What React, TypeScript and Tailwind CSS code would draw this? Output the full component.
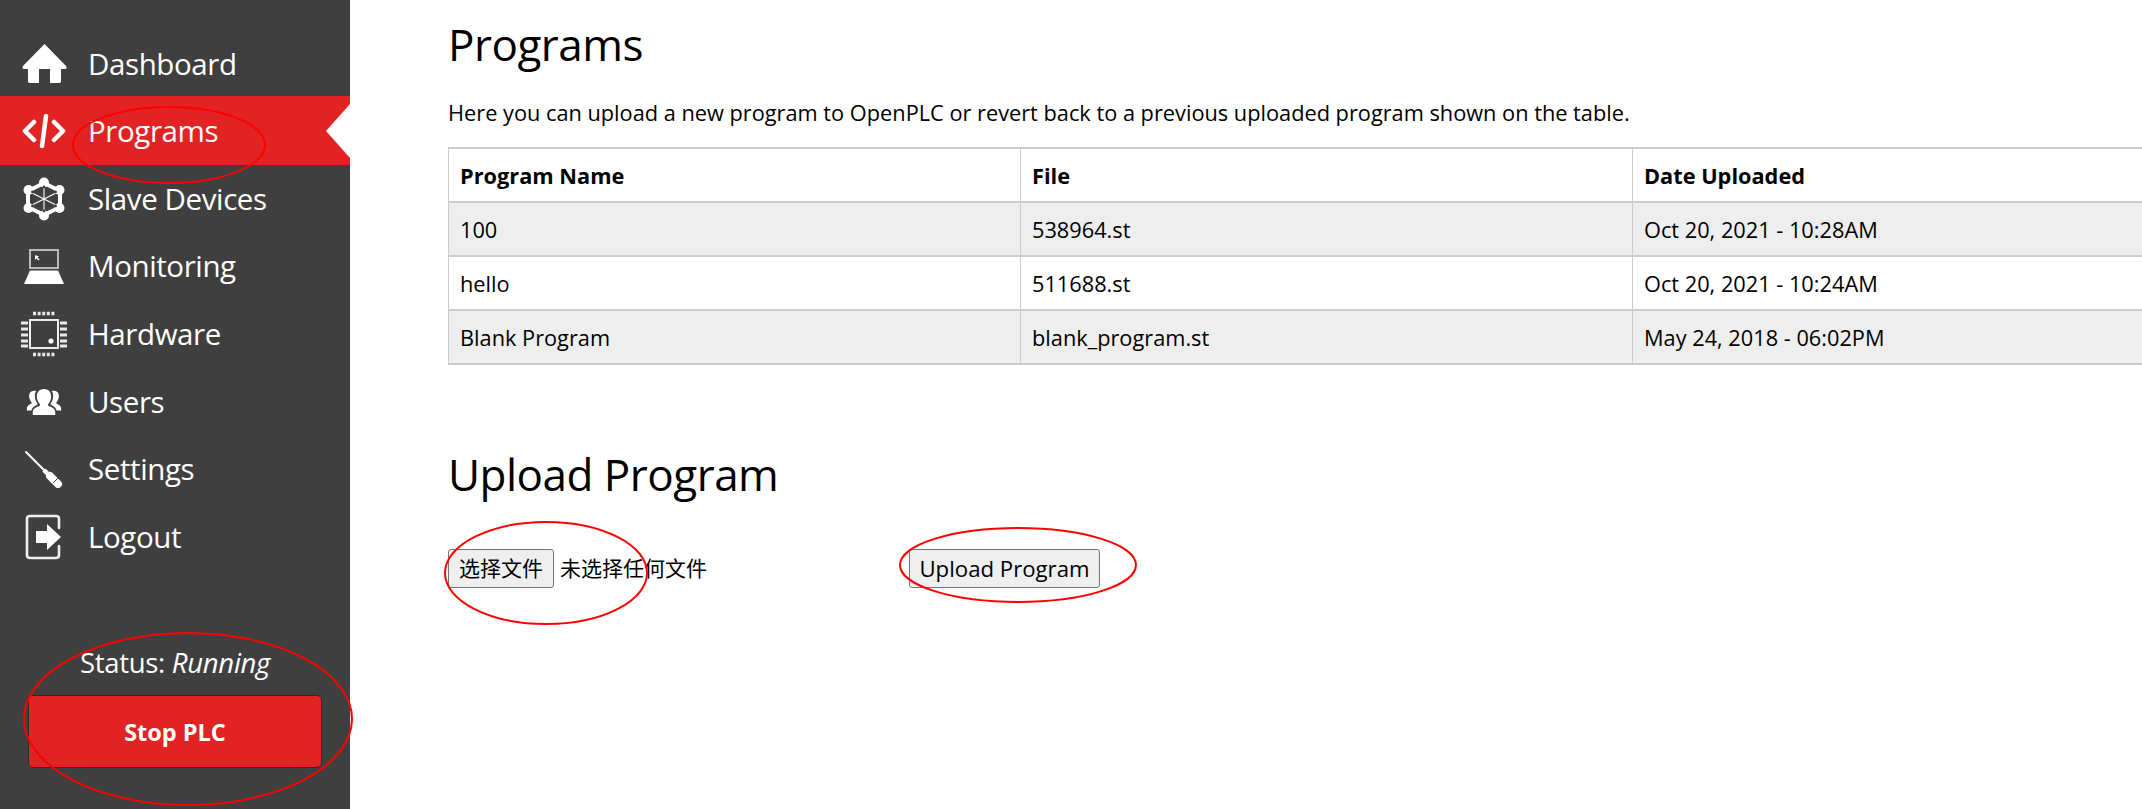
const HomeIcon = () => (
  <svg viewBox="0 0 45 39" className="h-[39px] w-[45px]" fill="white">
    <path d="M22.5 0 L44 22 Q45.5 25 43 25 L39 25 L39 37.5 Q39 39 37 39 L28 39 L28 25 L17 25 L17 39 L8 39 Q6 39 6 37.5 L6 25 L2 25 Q-0.5 25 1 22 Z" />
  </svg>
);

const CodeIcon = () => (
  <svg viewBox="0 0 44 34" className="h-[34px] w-[44px]" fill="none" stroke="white" strokeWidth="4.5" strokeLinecap="round" strokeLinejoin="round">
    <path d="M12 8 L3 17 L12 26" />
    <path d="M32 8 L41 17 L32 26" />
    <path d="M24 2 L20 32" />
  </svg>
);

const NetworkIcon = () => (
  <svg viewBox="0 0 42 44" className="h-[44px] w-[42px]" fill="none">
    <path d="M21 6 L37 14 L37 30 L21 38 L5 30 L5 14 Z" stroke="white" strokeWidth="4" strokeLinejoin="round" />
    <g stroke="white" strokeWidth="1.1">
      <path d="M21 6 L21 38" />
      <path d="M5 14 L37 30" />
      <path d="M37 14 L5 30" />
    </g>
    <g fill="white">
      <circle cx="21" cy="5.5" r="5" />
      <circle cx="21" cy="38.5" r="5" />
      <circle cx="5.5" cy="13" r="5" />
      <circle cx="36.5" cy="13" r="5" />
      <circle cx="5.5" cy="31" r="5" />
      <circle cx="36.5" cy="31" r="5" />
    </g>
    <g fill="#3f3f3f">
      <circle cx="21" cy="10" r="1.4" />
      <circle cx="21" cy="34" r="1.4" />
      <circle cx="9.5" cy="15" r="1.4" />
      <circle cx="32.5" cy="15" r="1.4" />
      <circle cx="9.5" cy="29" r="1.4" />
      <circle cx="32.5" cy="29" r="1.4" />
    </g>
  </svg>
);

const LaptopIcon = () => (
  <svg viewBox="0 0 40 36" className="h-[36px] w-[40px]">
    <rect x="6" y="1" width="28" height="18" fill="none" stroke="#d8d8d8" strokeWidth="1.6" />
    <path d="M11 6 L11 11 L12.4 9.6 L14.6 11.6 L15.6 10.6 L13.6 8.6 L15 7.4 Z" fill="white" />
    <path d="M6 21.5 L34 21.5 L40 35 L0 35 Z" fill="white" />
  </svg>
);

const ChipIcon = () => (
  <svg viewBox="0 0 46 46" className="h-[46px] w-[46px]" fill="none">
    <rect x="9" y="9" width="28" height="28" stroke="white" strokeWidth="1.8" />
    <circle cx="30" cy="30" r="2.6" fill="white" />
    <g stroke="#e8e8e8" strokeWidth="3.4">
      <path d="M12 2.5 H34" strokeDasharray="3 1.6" />
      <path d="M12 43.5 H34" strokeDasharray="3 1.6" />
    </g>
    <g stroke="#e8e8e8" strokeWidth="3">
      <path d="M0 12 H7 M0 18 H7 M0 24 H7 M0 30 H7 M0 35 H7" />
      <path d="M39 12 H46 M39 18 H46 M39 24 H46 M39 30 H46 M39 35 H46" />
    </g>
  </svg>
);

const UsersIcon = () => (
  <svg viewBox="0 0 38 30" className="h-[27px] w-[36px]" fill="white">
    <path d="M8 3 C3 3 1.5 8 3 12 C3.6 14 5 15.5 5.5 17 C3 18.6 0 19.6 0 23 L0 25 L5 25 C6 21 10 19.5 12 18 C10.5 15.5 8.8 13 8.8 8.5 C8.8 6.5 9.4 4.5 10.5 3.4 C9.8 3.1 8.9 3 8 3 Z" />
    <path d="M30 3 C35 3 36.5 8 35 12 C34.4 14 33 15.5 32.5 17 C35 18.6 38 19.6 38 23 L38 25 L33 25 C32 21 28 19.5 26 18 C27.5 15.5 29.2 13 29.2 8.5 C29.2 6.5 28.6 4.5 27.5 3.4 C28.2 3.1 29.1 3 30 3 Z" />
    <path d="M19 1 C13.5 1 11 5 11 9.5 C11 13 12.6 16 14.5 18 L14.5 19.5 C11 21.5 6.5 22.5 6.5 27 L6.5 30 L31.5 30 L31.5 27 C31.5 22.5 27 21.5 23.5 19.5 L23.5 18 C25.4 16 27 13 27 9.5 C27 5 24.5 1 19 1 Z" />
  </svg>
);

const ScrewdriverIcon = () => (
  <svg viewBox="0 0 40 38" className="h-[38px] w-[40px]" fill="none">
    <path d="M2 2 L20 20" stroke="white" strokeWidth="2" strokeLinecap="round" />
    <path d="M20 20 L26 26" stroke="white" strokeWidth="4.5" />
    <path d="M26 26 L34 34" stroke="white" strokeWidth="8" strokeLinecap="round" />
    <path d="M29 33 L35 27" stroke="#3f3f3f" strokeWidth="1" />
  </svg>
);

const LogoutIcon = () => (
  <svg viewBox="0 0 38 46" className="h-[46px] w-[38px]" fill="none">
    <path d="M34 14 L34 5 Q34 2 31 2 L5 2 Q2 2 2 5 L2 41 Q2 44 5 44 L31 44 Q34 44 34 41 L34 32" stroke="#eeeeee" strokeWidth="2.6" strokeLinecap="round" />
    <path d="M11 17 L22 17 L22 10 L36 23 L22 36 L22 29 L11 29 Z" fill="white" />
  </svg>
);

const navItems = [
  { label: 'Dashboard', icon: <HomeIcon /> },
  { label: 'Programs', icon: <CodeIcon />, active: true },
  { label: 'Slave Devices', icon: <NetworkIcon /> },
  { label: 'Monitoring', icon: <LaptopIcon /> },
  { label: 'Hardware', icon: <ChipIcon /> },
  { label: 'Users', icon: <UsersIcon /> },
  { label: 'Settings', icon: <ScrewdriverIcon /> },
  { label: 'Logout', icon: <LogoutIcon /> },
];

const rows = [
  ['100', '538964.st', 'Oct 20, 2021 - 10:28AM'],
  ['hello', '511688.st', 'Oct 20, 2021 - 10:24AM'],
  ['Blank Program', 'blank_program.st', 'May 24, 2018 - 06:02PM'],
];

const cellClass = 'h-[54px] border-y-2 border-x border-[#cccccc] px-[11px] pt-[2px] text-left align-middle';
const nativeBtn = 'h-[39px] rounded-[3px] border border-[#767676] bg-[#efefef] text-black';

export default function App() {
  return (
    <div className="relative flex h-screen w-full overflow-hidden bg-white font-['Open_Sans','Noto_Sans_CJK_SC',sans-serif] text-black">
      <aside className="flex w-[350px] shrink-0 flex-col bg-[#3f3f3f] pt-[30px] pb-[41px] text-white">
        <nav className="flex flex-col">
          {navItems.map((item) =>
            item.active ? (
              <div key={item.label} className="relative -mt-[2px] flex h-[69.6px] items-center bg-[#e12323] pt-[2px]">
                <span className="flex w-[88px] justify-center">{item.icon}</span>
                <span className="text-[29.5px] tracking-[-0.4px]">{item.label}</span>
                <span className="absolute top-[8px] right-0 h-0 w-0 border-y-[27px] border-r-[24px] border-y-transparent border-r-white" />
              </div>
            ) : (
              <div key={item.label} className="flex h-[67.6px] items-center">
                <span className="flex w-[88px] justify-center">{item.icon}</span>
                <span className="text-[29.5px] tracking-[-0.4px]">{item.label}</span>
              </div>
            )
          )}
        </nav>
        <div className="mt-auto px-[28px]">
          <p className="mb-[14px] text-center text-[27.5px] leading-[36px] tracking-[-0.3px]">
            Status: <em>Running</em>
          </p>
          <button className="h-[73px] w-[294px] rounded-[5px] border border-[#2b2b2b] bg-[#e12323] pt-[3px] text-[23.5px] font-bold text-white">
            Stop PLC
          </button>
        </div>
      </aside>

      <main className="min-w-0 flex-1 pl-[98px]">
        <h1 className="pt-[12px] text-[44px] leading-[64px] tracking-[-0.5px]">Programs</h1>
        <p className="mt-[23px] text-[21.75px] leading-[28px]">
          Here you can upload a new program to OpenPLC or revert back to a previous uploaded program shown on the table.
        </p>
        <table className="mt-[20px] w-[1900px] table-fixed border-collapse text-[21.75px]">
          <colgroup>
            <col className="w-[572px]" />
            <col className="w-[612px]" />
            <col />
          </colgroup>
          <thead>
            <tr>
              <th className={cellClass}>Program Name</th>
              <th className={cellClass}>File</th>
              <th className={cellClass}>Date Uploaded</th>
            </tr>
          </thead>
          <tbody>
            {rows.map((row, i) => (
              <tr key={row[0]} className={i % 2 === 0 ? 'bg-[#eeeeee]' : 'bg-white'}>
                {row.map((cell) => (
                  <td key={cell} className={cellClass}>
                    {cell}
                  </td>
                ))}
              </tr>
            ))}
          </tbody>
        </table>

        <h2 className="mt-[77px] text-[44px] leading-[64px] tracking-[-0.5px]">Upload Program</h2>
        <form className="mt-[43px] flex items-center">
          <div className="flex w-[461px] items-center">
            <button type="button" className={`${nativeBtn} w-[106px] text-[21px]`}>
              选择文件
            </button>
            <span className="ml-[6px] text-[21px] leading-[39px]">未选择任何文件</span>
          </div>
          <button type="button" className={`${nativeBtn} w-[191px] text-[22.2px]`}>
            Upload Program
          </button>
        </form>
      </main>

      <svg className="pointer-events-none absolute inset-0 h-full w-full" fill="none" stroke="#ff0000" strokeWidth="2">
        <ellipse cx="169" cy="145" rx="96" ry="38" />
        <ellipse cx="188" cy="719" rx="164" ry="86" />
        <ellipse cx="546" cy="573" rx="101" ry="51" />
        <ellipse cx="1018" cy="565" rx="118" ry="37" />
      </svg>
    </div>
  );
}
